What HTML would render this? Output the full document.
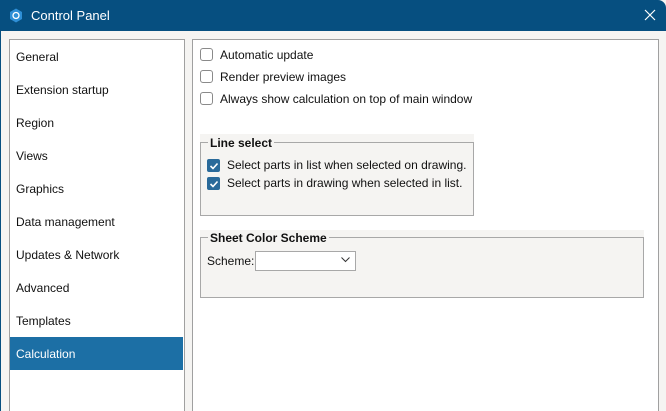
<!DOCTYPE html><html><head><style>
html,body{margin:0;width:666px;height:411px;overflow:hidden}
body{background:#f5f4f2;font-family:"Segoe UI","Liberation Sans",sans-serif;font-size:12px;color:#111;position:relative}
.t{position:absolute;left:0;top:0;width:666px;height:31px;background:#064f80;color:#fff;border-top-right-radius:8px}
.t span{position:absolute;left:31px;top:8px;font-size:13px}
.win{position:absolute;left:0;top:31px;width:1px;height:380px;background:#064f80}
.lp{position:absolute;left:9px;top:39px;width:174px;height:371px;background:#fff;border:1px solid #a0a0a0;border-bottom:none;overflow:hidden}
.it{position:absolute;left:6px;font-size:12px}
.sel{position:absolute;left:0;top:297px;width:173px;height:33px;background:#1c6fa5}
.rp{position:absolute;left:192px;top:39px;width:465px;height:371px;background:#fff;border:1px solid #a0a0a0;border-bottom:none}
.cb{position:absolute;width:11px;height:11px;border:1px solid #8a8a8a;border-radius:3px;background:#fff}
.ck{position:absolute;width:13px;height:13px;border-radius:2px;background:#2a6a9a}
.lb{position:absolute;font-size:12px}
.g{position:absolute;background:#f5f4f2}
.gb{position:absolute;border:1px solid #a8a8a8}
.lg{position:absolute;background:#f5f4f2;font-weight:bold;padding:0 2px;font-size:12px}
</style></head><body>
<div class="t"><svg style="position:absolute;left:9px;top:8px" width="14" height="15" viewBox="0 0 14 15"><path d="M7 0.5L13 4v7l-6 3.5L1 11V4z" fill="#2e8fd6"/><circle cx="7" cy="7.5" r="3" fill="none" stroke="#fff" stroke-width="1.3"/></svg><span>Control Panel</span>
<svg style="position:absolute;left:644px;top:9px" width="12" height="12"><path d="M1 1L11 11M11 1L1 11" stroke="#fff" stroke-width="1.2"/></svg></div>
<div class="win"></div>
<div class="lp">
<div class="it" style="top:10px">General</div>
<div class="it" style="top:43px">Extension startup</div>
<div class="it" style="top:76px">Region</div>
<div class="it" style="top:109px">Views</div>
<div class="it" style="top:142px">Graphics</div>
<div class="it" style="top:175px">Data management</div>
<div class="it" style="top:208px">Updates &amp; Network</div>
<div class="it" style="top:241px">Advanced</div>
<div class="it" style="top:274px">Templates</div>
<div class="sel"></div><div class="it" style="top:307px;color:#fff">Calculation</div>
</div>
<div class="rp"></div>
<div class="cb" style="left:200px;top:48px"></div><div class="lb" style="left:220px;top:48px">Automatic update</div>
<div class="cb" style="left:200px;top:70px"></div><div class="lb" style="left:220px;top:70px">Render preview images</div>
<div class="cb" style="left:200px;top:92px"></div><div class="lb" style="left:220px;top:92px">Always show calculation on top of main window</div>
<div class="g" style="left:200px;top:134px;width:274px;height:82px"></div>
<div class="gb" style="left:200px;top:142px;width:272px;height:72px"></div>
<div class="lg" style="left:208px;top:136px">Line select</div>
<div class="ck" style="left:207px;top:159px"></div><svg style="position:absolute;left:209px;top:161px" width="10" height="10"><path d="M1.5 5l2.5 2.5L8.5 2.5" stroke="#fff" stroke-width="1.6" fill="none"/></svg>
<div class="lb" style="left:227px;top:158px">Select parts in list when selected on drawing.</div>
<div class="ck" style="left:207px;top:177px"></div><svg style="position:absolute;left:209px;top:179px" width="10" height="10"><path d="M1.5 5l2.5 2.5L8.5 2.5" stroke="#fff" stroke-width="1.6" fill="none"/></svg>
<div class="lb" style="left:227px;top:176px">Select parts in drawing when selected in list.</div>
<div class="g" style="left:200px;top:230px;width:444px;height:67px"></div>
<div class="gb" style="left:200px;top:237px;width:442px;height:59px"></div>
<div class="lg" style="left:208px;top:231px">Sheet Color Scheme</div>
<div class="lb" style="left:207px;top:254px">Scheme:</div>
<div style="position:absolute;left:255px;top:251px;width:99px;height:18px;border:1px solid #a8a8a8;background:#fff"></div>
<svg style="position:absolute;left:341px;top:257px" width="9" height="6"><path d="M0.5 0.5L4.5 4.5L8.5 0.5" stroke="#333" fill="none"/></svg>
</body></html>
